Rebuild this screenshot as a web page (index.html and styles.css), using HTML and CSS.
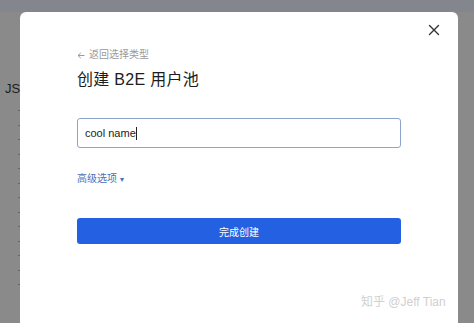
FILE: index.html
```html
<!DOCTYPE html>
<html>
<head>
<meta charset="utf-8">
<link rel="stylesheet" href="styles.css">
</head>
<body>
<div class="page">
  <div class="topbar"></div>
  <div class="bg-left">
    <div class="js">JS</div>
    <div class="ticks">
      <i></i><i></i><i></i><i></i><i></i><i></i><i></i><i></i><i></i><i></i><i></i><i></i><i></i>
    </div>
  </div>
  <div class="modal">
    <button class="close" aria-label="close">
      <svg width="12" height="12" viewBox="0 0 12 12"><path d="M1.5 1.5 L10.5 10.5 M10.5 1.5 L1.5 10.5" stroke="#333" stroke-width="1.4" stroke-linecap="round"/></svg>
    </button>
    <div class="content">
      <div class="back"><svg class="arrow" width="8" height="7" viewBox="0 0 8 7"><path d="M7.5 3.5 H1 M3.8 0.8 L1 3.5 L3.8 6.2" fill="none" stroke="#9a9a9a" stroke-width="1"/></svg>返回选择类型</div>
      <h1 class="title">创建 B2E 用户池</h1>
      <div class="input">cool name<span class="caret"></span></div>
      <div class="advanced">高级选项 <span class="tri">▾</span></div>
      <button class="submit">完成创建</button>
    </div>
  </div>
  <div class="watermark">知乎 @Jeff Tian</div>
</div>
</body>
</html>
```
FILE: styles.css
```css
html, body {
  margin: 0;
  padding: 0;
}
body {
  width: 474px;
  height: 323px;
  overflow: hidden;
  background: #8a8a8a;
  font-family: "Liberation Sans", "Noto Sans CJK SC", sans-serif;
}
.page {
  position: relative;
  width: 474px;
  height: 323px;
  display: flex;
  align-items: flex-start;
  background: #8a8a8a;
}
.topbar {
  position: absolute;
  left: 0;
  top: 0;
  width: 474px;
  height: 12px;
  background: #83868c;
}
.bg-left {
  width: 20px;
  flex: none;
  position: relative;
  height: 323px;
}
.js {
  position: absolute;
  left: 5px;
  top: 81px;
  font-size: 13px;
  color: #1c1c1c;
  white-space: nowrap;
  z-index: 0;
}
.ticks {
  position: absolute;
  left: 18px;
  top: 110px;
  display: flex;
  flex-direction: column;
  gap: 13.5px;
}
.ticks i {
  display: block;
  width: 2px;
  height: 1px;
  background: #5f6b68;
}
.modal {
  position: relative;
  z-index: 1;
  margin-top: 12px;
  width: 438px;
  height: 320px;
  background: #fff;
  border-radius: 6px 6px 0 0;
}
.close {
  position: absolute;
  top: 12px;
  right: 18px;
  border: 0;
  padding: 0;
  background: none;
  width: 12px;
  height: 12px;
}
.close svg { display: block; }
.content {
  padding: 36px 57px 0 57px;
  display: flex;
  flex-direction: column;
}
.back {
  font-size: 10px;
  color: #9a9a9a;
  line-height: 14px;
  display: flex;
  align-items: center;
}
.back .arrow {
  margin-right: 4px;
}
.title {
  margin: 8px 0 0 0;
  font-size: 16px;
  font-weight: normal;
  color: #1d1d1d;
  line-height: 20px;
  letter-spacing: 0.3px;
}
.input {
  margin-top: 28px;
  height: 28px;
  border: 1px solid #8ea3cc;
  border-radius: 3px;
  box-sizing: content-box;
  display: flex;
  align-items: center;
  padding-left: 7px;
  font-size: 11px;
  color: #222;
}
.caret {
  display: inline-block;
  width: 1px;
  height: 13px;
  background: #222;
  margin-left: 0;
}
.advanced {
  margin-top: 24px;
  font-size: 10px;
  color: #4e6fb5;
  line-height: 14px;
}
.advanced .tri {
  font-size: 8px;
}
.submit {
  margin-top: 31px;
  height: 26px;
  border: 0;
  border-radius: 3px;
  background: #2361e2;
  color: #fff;
  font-family: "Liberation Sans", "Noto Sans CJK SC", sans-serif;
  font-size: 10px;
  padding: 0;
}
.watermark {
  position: absolute;
  left: 361px;
  top: 292px;
  z-index: 2;
  font-size: 12px;
  color: #d0d0d0;
  white-space: nowrap;
}
```
